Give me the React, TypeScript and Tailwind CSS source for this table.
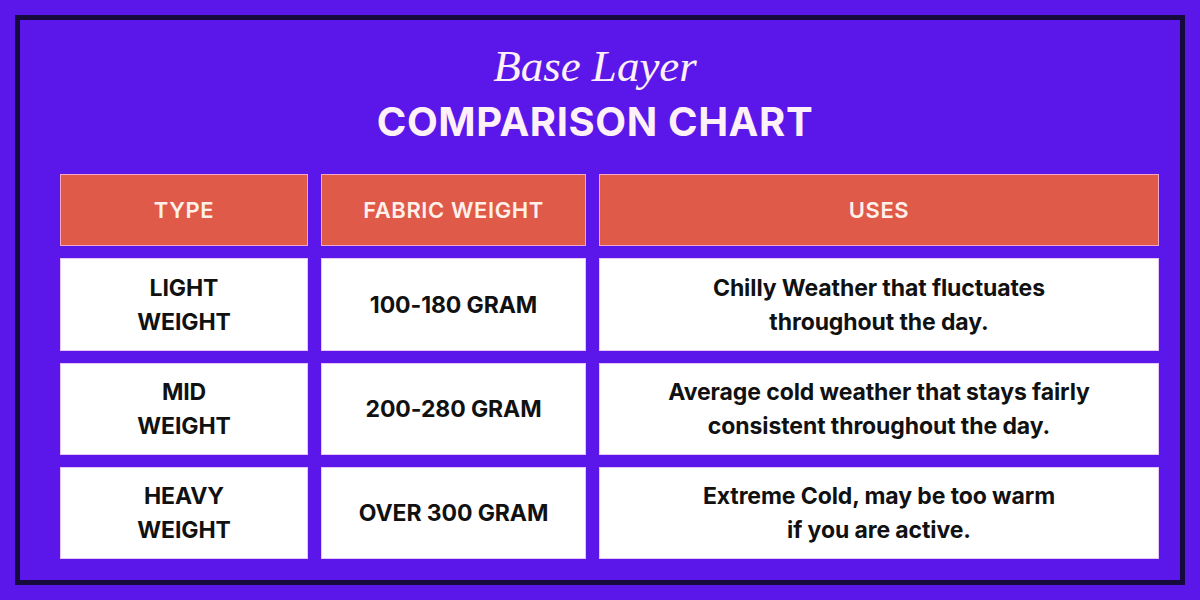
const rows = [
  { type: ["LIGHT", "WEIGHT"], weight: "100-180 GRAM", uses: ["Chilly Weather that fluctuates", "throughout the day."] },
  { type: ["MID", "WEIGHT"], weight: "200-280 GRAM", uses: ["Average cold weather that stays fairly", "consistent throughout the day."] },
  { type: ["HEAVY", "WEIGHT"], weight: "OVER 300 GRAM", uses: ["Extreme Cold, may be too warm", "if you are active."] },
]

function HeadCell({ children }: { children: string }) {
  return (
    <div className="flex items-center justify-center border border-[#f0a8c8] bg-[#e05a49] text-[22px] font-semibold tracking-[0.6px] text-[#fff1ea]">
      {children}
    </div>
  )
}

function Cell({ lines }: { lines: string[] }) {
  return (
    <div className="flex flex-col items-center justify-center border border-[#e9c4f6] bg-white text-center text-[23px] leading-[34px] font-bold tracking-[-0.1px] text-[#111]">
      {lines.map((l) => (
        <span key={l}>{l}</span>
      ))}
    </div>
  )
}

export default function App() {
  return (
    <div className="h-[600px] w-[1200px] bg-[#5b17e9] p-[15px] [font-family:Inter,'Liberation_Sans',sans-serif]">
      <div className="flex h-full flex-col border-[5px] border-[#160a3c] pl-[40px] pr-[22px]">
        <div className="ml-[-40px] mr-[-22px] flex flex-col items-center pr-[10px] text-[#fdf0f6]">
          <div className="mt-[17px] h-[58px] text-[45px] leading-[58px] italic [font-family:'Liberation_Serif',serif]">
            Base Layer
          </div>
          <div className="mt-[4px] text-[40px] leading-[46px] font-bold tracking-[0.6px]">
            COMPARISON CHART
          </div>
        </div>
        <div className="mt-[29px] grid grid-cols-[248px_265px_560px] grid-rows-[72px_93px_92px_92px] gap-x-[13px] gap-y-[12px]">
          <HeadCell>TYPE</HeadCell>
          <HeadCell>FABRIC WEIGHT</HeadCell>
          <HeadCell>USES</HeadCell>
          {rows.map((r) => (
            <>
              <Cell key={r.weight + "t"} lines={r.type} />
              <Cell key={r.weight + "w"} lines={[r.weight]} />
              <Cell key={r.weight + "u"} lines={r.uses} />
            </>
          ))}
        </div>
      </div>
    </div>
  )
}
